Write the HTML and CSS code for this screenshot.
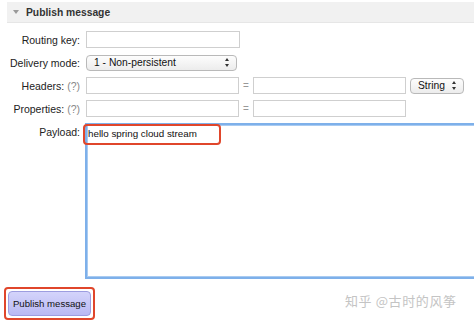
FILE: index.html
```html
<!DOCTYPE html>
<html>
<head>
<meta charset="utf-8">
<link rel="stylesheet" href="styles.css">
</head>
<body>
<div class="panel">
  <div class="header"><span class="tri"></span><span class="title">Publish message</span></div>
  <div class="form">
    <div class="label">Routing key:</div>
    <div class="field"><div class="input w154"></div></div>

    <div class="label">Delivery mode:</div>
    <div class="field"><div class="select w149"><span>1 - Non-persistent</span><span class="arrows"></span></div></div>

    <div class="label">Headers: <span class="help">(?)</span></div>
    <div class="field"><div class="input w153"></div><span class="eq">=</span><div class="input w153"></div><div class="select w52"><span>String</span><span class="arrows"></span></div></div>

    <div class="label">Properties: <span class="help">(?)</span></div>
    <div class="field"><div class="input w153"></div><span class="eq">=</span><div class="input w153"></div></div>

    <div class="label lp">Payload:</div>
    <div class="field"><div class="textarea"><span class="ptext">hello spring cloud stream</span><div class="mark mark-payload"></div></div></div>
  </div>
  <div class="actions">
    <div class="btnwrap"><div class="button">Publish message</div></div>
  </div>
  <div class="watermark">知乎 @古时的风筝</div>
</div>
</body>
</html>
```
FILE: styles.css
```css
html, body { margin: 0; padding: 0; background: #fff; }
body { width: 474px; height: 322px; overflow: hidden; font-family: "Liberation Sans", Arial, sans-serif; font-size: 10.5px; color: #222; }
.panel { position: relative; height: 322px; }
.header { margin: 2px 0 0 7px; height: 20px; background: #f1f1f1; border-bottom: 1px solid #e6e6e6; display: flex; align-items: center; }
.tri { width: 0; height: 0; border-left: 3.5px solid transparent; border-right: 3.5px solid transparent; border-top: 4px solid #9a9a9a; margin: 0 7px 0 6px; }
.title { font-weight: bold; font-size: 10.3px; color: #333; }
.form { display: grid; grid-template-columns: 80px 1fr; column-gap: 6px; row-gap: 6px; margin-top: 8px; }
.label { text-align: right; display: flex; align-items: center; justify-content: flex-end; height: 17px; color: #222; white-space: nowrap; }
.label.lp { align-items: flex-start; margin-top: 3px; }
.help { color: #888; margin-left: 3px; }
.field { display: flex; align-items: center; height: 17px; }
.input { height: 15px; border: 1px solid #cfcfcf; background: #fff; box-sizing: content-box; }
.w154 { width: 152px; }
.w153 { width: 151px; }
.eq { width: 14px; text-align: center; color: #999; font-size: 10px; }
.select { height: 14px; border: 1px solid #b9b9b9; border-radius: 4px; background: linear-gradient(#fdfdfd, #ececec); display: flex; align-items: center; justify-content: space-between; padding: 0 6px 0 7px; font-size: 10.3px; color: #111; box-sizing: content-box; }
.w149 { width: 136px; }
.w52 { width: 39px; margin-left: 4px; }
.arrows { position: relative; width: 5px; height: 9px; }
.arrows::before, .arrows::after { content: ""; position: absolute; left: 0; border-left: 2.5px solid transparent; border-right: 2.5px solid transparent; }
.arrows::before { top: 0; border-bottom: 3.5px solid #333; }
.arrows::after { bottom: 0; border-top: 3.5px solid #333; }
.field:has(.textarea) { height: auto; }
.textarea { position: relative; width: 400px; height: 152px; border: 2px solid #7eb0ea; box-shadow: inset 0 0 0 1px #a9cbf1; margin-left: -1px; background: #fff; }
.ptext { position: absolute; left: 1px; top: 3px; font-size: 9.8px; color: #111; }
.mark { position: absolute; border: 2px solid #e0462b; border-radius: 4px; }
.mark-payload { left: -4px; top: -1px; width: 134px; height: 17px; }
.actions { margin: 8px 0 0 4px; }
.btnwrap { display: inline-block; border: 2px solid #e0462b; border-radius: 4px; padding: 2px; }
.button { width: 81px; height: 23px; border: 1px solid #9d9de0; border-radius: 4px; background: linear-gradient(#d4d4fb, #b9b9f3); display: flex; align-items: center; justify-content: center; font-size: 9.6px; color: #111; }
.watermark { position: absolute; left: 345px; top: 289px; font-family: "Noto Sans CJK SC", sans-serif; font-size: 13px; color: #c4c4c4; letter-spacing: 0.6px; }
```
